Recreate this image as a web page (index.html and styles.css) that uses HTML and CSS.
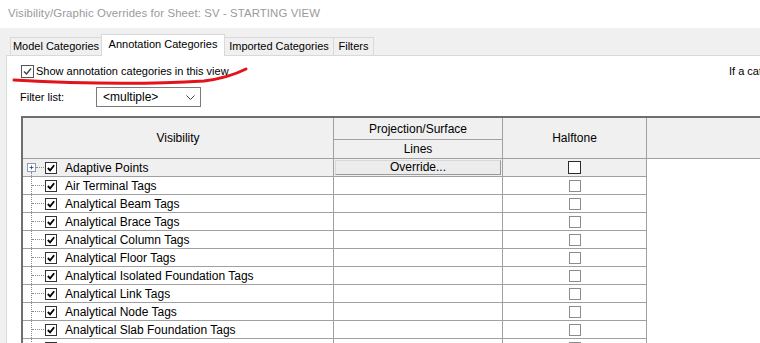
FILE: index.html
```html
<!DOCTYPE html>
<html lang="en">
<head>
  <meta charset="UTF-8">
  <title>Visibility/Graphic Overrides</title>
  <link rel="stylesheet" href="styles.css">
</head>
<body>
  <!-- Window title -->
  <div class="titlebar">Visibility/Graphic Overrides for Sheet: SV - STARTING VIEW</div>

  <div class="dialog">
    <!-- Tabs -->
    <div class="tabs">
      <div class="tab tab-model">Model Categories</div>
      <div class="tab tab-annotation active">Annotation Categories</div>
      <div class="tab tab-imported">Imported Categories</div>
      <div class="tab tab-filters">Filters</div>
    </div>

    <div class="panel">
      <div class="options-row">
        <label class="show-option">
          <span class="check check-show">
            <svg viewBox="0 0 11 11"><polyline points="2,5.5 4.5,8 9,2.5" /></svg>
          </span>
          Show annotation categories in this view
        </label>
        <span class="hint">If a category is unchecked, it will not be visible.</span>
      </div>

      <div class="filter-row">
        <span class="filter-label">Filter list:</span>
        <div class="select">
          <span>&lt;multiple&gt;</span>
          <svg class="chevron" viewBox="0 0 9 5"><polyline points="0.5,0.5 4.5,4.5 8.5,0.5" /></svg>
        </div>
      </div>

      <table class="grid">
        <colgroup>
          <col class="col-vis">
          <col class="col-lines">
          <col class="col-half">
          <col class="col-extra">
        </colgroup>
        <thead>
          <tr class="head-top">
            <th rowspan="2">Visibility</th>
            <th>Projection/Surface</th>
            <th rowspan="2">Halftone</th>
            <th rowspan="2"></th>
          </tr>
          <tr class="head-sub">
            <th>Lines</th>
          </tr>
        </thead>
        <tbody id="rows"></tbody>
      </table>
    </div>
  </div>

  <!-- Red pen mark drawn over the screenshot -->
  <svg class="pen-mark" viewBox="0 0 760 343">
    <path d="M14 80 Q 120 86 204 81 Q 228 78 246 69" />
  </svg>

  <script>
    // Last entry is only peeking in at the bottom edge, so it has no label
    const categories = [
      'Adaptive Points',
      'Air Terminal Tags',
      'Analytical Beam Tags',
      'Analytical Brace Tags',
      'Analytical Column Tags',
      'Analytical Floor Tags',
      'Analytical Isolated Foundation Tags',
      'Analytical Link Tags',
      'Analytical Node Tags',
      'Analytical Slab Foundation Tags',
      ''
    ];

    const checkSvg = '<svg viewBox="0 0 11 11"><polyline points="2,5.5 4.5,8 9,2.5" /></svg>';
    const rows = document.getElementById('rows');

    categories.forEach((name, i) => {
      const first = i === 0;
      const tr = document.createElement('tr');
      if (first) tr.className = 'selected';
      tr.innerHTML = `
        <td>
          <div class="tree-cell">
            <span class="tree ${first ? 'tree-root' : ''}">
              ${first ? '<span class="expander"><svg viewBox="0 0 9 9"><path d="M2 4.5h5M4.5 2v5" /></svg></span>' : ''}
            </span>
            <span class="check">${checkSvg}</span>
            <span class="name">${name}</span>
          </div>
        </td>
        <td>${first ? '<div class="override">Override...</div>' : ''}</td>
        <td><span class="half-box ${first ? 'focus' : ''}"></span></td>
      `;
      rows.appendChild(tr);
    });
  </script>
</body>
</html>
```

FILE: styles.css
```css
* {
  margin: 0;
  padding: 0;
  box-sizing: border-box;
}

body {
  width: 760px;
  height: 343px;
  overflow: hidden;
  position: relative;
  background-color: #ffffff;
  font-family: "Liberation Sans", Arial, sans-serif;
  font-size: 12px;
  color: #000000;
}

.titlebar {
  height: 28px;
  line-height: 27px;
  padding-left: 8px;
  font-size: 11.4px;
  letter-spacing: 0.1px;
  color: #9a9a9a;
  white-space: nowrap;
}

.dialog {
  background-color: #f0f0f0;
  padding-left: 6px;
  height: 315px;
}

/* Tabs */
.tabs {
  display: flex;
  align-items: flex-end;
  height: 27px;
  padding-left: 4px;
}

.tab {
  height: 18px;
  line-height: 16px;
  font-size: 11px;
  text-align: center;
  white-space: nowrap;
  background-color: #f0f0f0;
  border: 1px solid #d9d9d9;
  border-bottom: none;
  margin-right: -1px;
}

.tab.active {
  position: relative;
  z-index: 1;
  height: 22px;
  line-height: 19px;
  margin-bottom: -1px;
  background-color: #ffffff;
}

.tab-model { width: 92px; }
.tab-annotation { width: 124px; }
.tab-imported { width: 110px; }
.tab-filters { width: 41px; }

/* Panel */
.panel {
  background-color: #ffffff;
  border-top: 1px solid #d9d9d9;
  border-left: 1px solid #d9d9d9;
  height: 288px;
  padding: 8px 0 0 14px;
}

.options-row {
  display: grid;
  grid-template-columns: 708px max-content;
  align-items: center;
  height: 14px;
  font-size: 11px;
  white-space: nowrap;
}

.show-option {
  display: flex;
  align-items: center;
}

.check {
  display: inline-flex;
  width: 12px;
  height: 12px;
  border: 1px solid #333333;
  background-color: #ffffff;
}

.check svg {
  width: 10px;
  height: 10px;
  fill: none;
  stroke: #000000;
  stroke-width: 2;
}

.check-show {
  width: 13px;
  height: 13px;
  margin-right: 2px;
  border-color: #555555;
}

.check-show svg {
  width: 11px;
  height: 11px;
  stroke: #444444;
  stroke-width: 1.4;
}

.filter-row {
  display: flex;
  align-items: center;
  margin: 9px 0 0 -1px;
  height: 20px;
  font-size: 11px;
}

.filter-label {
  width: 76px;
}

.select {
  display: flex;
  align-items: center;
  justify-content: space-between;
  width: 105px;
  height: 20px;
  padding: 0 5px 0 6px;
  border: 1px solid #7a7a7a;
  font-size: 12px;
}

.chevron {
  width: 9px;
  height: 5px;
  fill: none;
  stroke: #444444;
  stroke-width: 1;
}

/* Grid */
.grid {
  margin: 9px 0 0 0;
  width: 826px;
  table-layout: fixed;
  border-collapse: separate;
  border-spacing: 0;
  border-top: 2px solid #6e6e6e;
  border-left: 2px solid #6e6e6e;
}

.col-vis { width: 311px; }
.col-lines { width: 169px; }
.col-half { width: 144px; }
.col-extra { width: 200px; }

.grid th {
  background-color: #f0f0f0;
  font-weight: normal;
  font-size: 12px;
  border-right: 1px solid #a0a0a0;
  border-bottom: 1px solid #a0a0a0;
  text-align: center;
  padding: 0;
}

.head-top th {
  height: 22px;
}

.head-sub th {
  height: 19px;
}

.grid td {
  height: 18px;
  padding: 0;
  border-right: 1px solid #a0a0a0;
  border-bottom: 1px solid #a0a0a0;
  vertical-align: middle;
  white-space: nowrap;
}

.grid tr.selected td {
  background-color: #f0f0f0;
}

.tree-cell {
  display: flex;
  align-items: center;
  height: 17px;
}

.tree {
  position: relative;
  align-self: stretch;
  width: 22px;
}

.tree::before {
  content: "";
  position: absolute;
  left: 8px;
  top: 0;
  bottom: 0;
  border-left: 1px dotted #8c8c8c;
}

.tree::after {
  content: "";
  position: absolute;
  left: 9px;
  width: 12px;
  top: 8px;
  border-top: 1px dotted #8c8c8c;
}

.tree-root::before {
  top: 13px;
}

.tree-root::after {
  left: 13px;
  width: 8px;
}

.expander {
  position: absolute;
  left: 4px;
  top: 4px;
  width: 9px;
  height: 9px;
  border: 1px solid #8a9bb5;
  background-color: #ffffff;
  display: flex;
}

.expander svg {
  width: 7px;
  height: 7px;
  stroke: #1c3a7a;
  stroke-width: 1;
}

.name {
  margin-left: 8px;
}

.override {
  margin: 0 1px;
  height: 15px;
  line-height: 13px;
  text-align: center;
  background-color: #ececec;
  border: 1px solid;
  border-color: #d8d8d8 #9a9a9a #9a9a9a #d8d8d8;
}

.half-box {
  display: block;
  width: 12px;
  height: 12px;
  margin: 0 auto;
  border: 1px solid #8c8c8c;
  background-color: #ffffff;
}

.half-box.focus {
  width: 13px;
  height: 13px;
  border-color: #2b2b2b;
}

/* Red pen mark over everything */
.pen-mark {
  position: absolute;
  left: 0;
  top: 0;
  width: 760px;
  height: 343px;
  pointer-events: none;
}

.pen-mark path {
  fill: none;
  stroke: #e3121b;
  stroke-width: 3;
  stroke-linecap: round;
}
```
